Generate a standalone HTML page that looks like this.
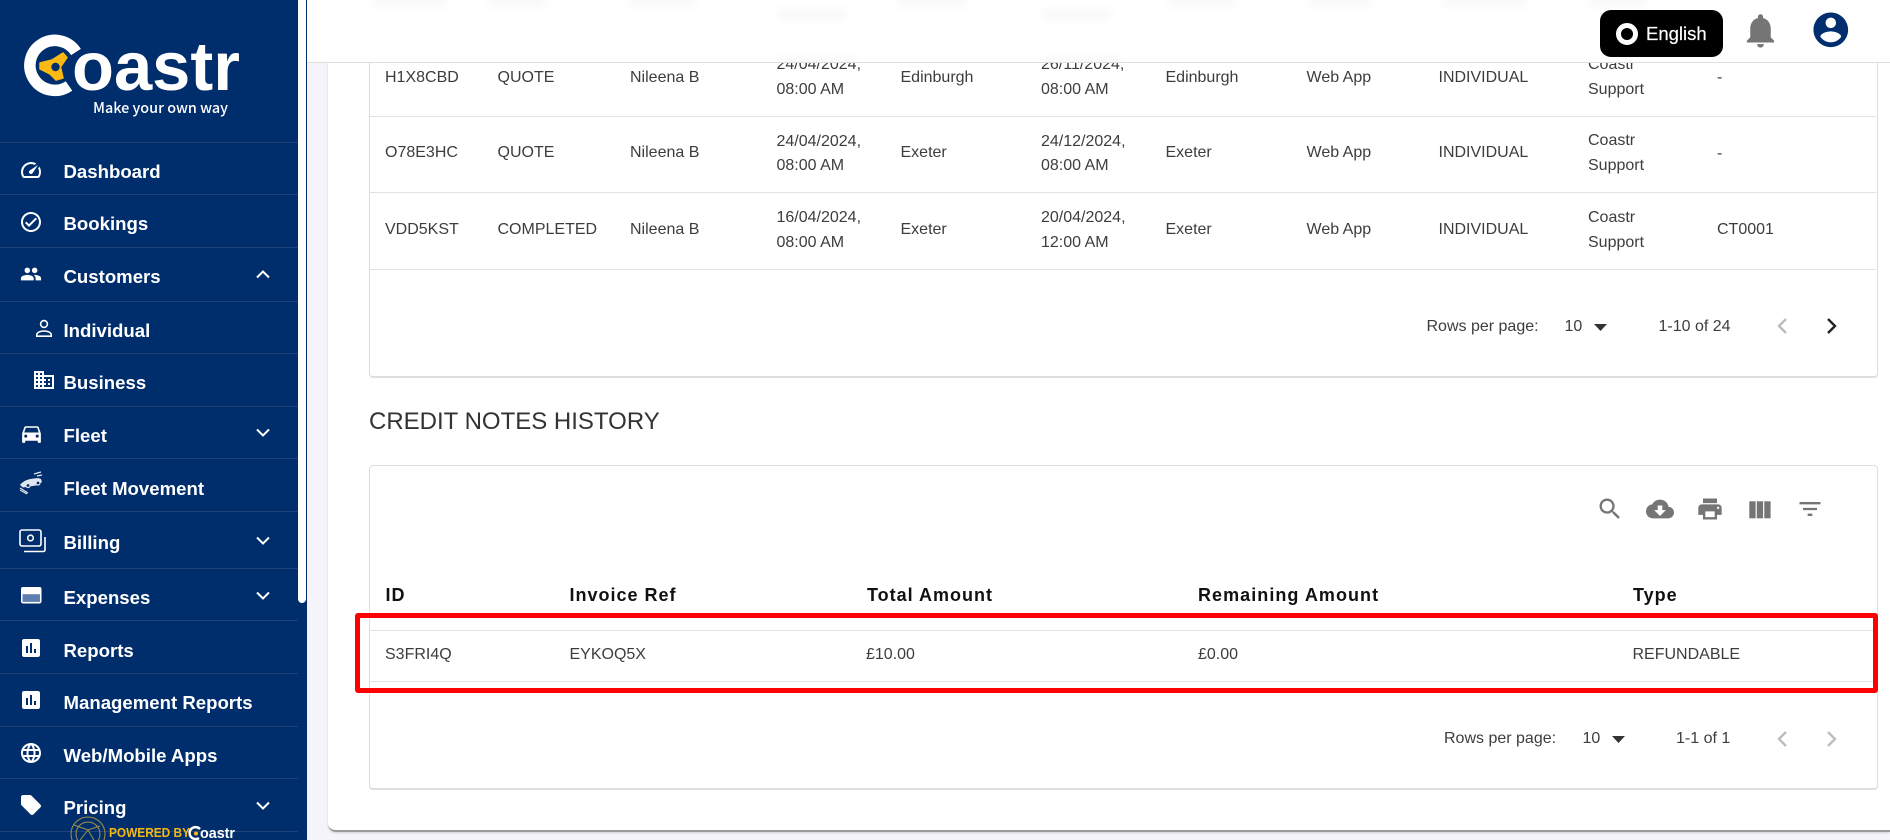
<!DOCTYPE html>
<html><head><meta charset="utf-8"><title>Coastr</title>
<style>
html,body{margin:0;padding:0;width:1890px;height:840px;overflow:hidden;background:#f4f4fa;font-family:"Liberation Sans",sans-serif}
.a{position:absolute}
.t{position:absolute;white-space:nowrap;line-height:20px;font-size:16px;color:#3d3d3d}
.h{position:absolute;white-space:nowrap;line-height:20px;font-size:18px;font-weight:bold;color:#111;letter-spacing:1px}
.ln{position:absolute;left:369px;width:1507px;height:1.5px;background:#e2e2e2}
.s{position:absolute;left:63.5px;white-space:nowrap;line-height:22px;font-size:18.6px;font-weight:bold;color:#fff}
.d{position:absolute;left:0;width:298px;height:1.5px;background:#1f4379}
.i{position:absolute;width:24px;height:24px;fill:#fff}
.ch{position:absolute;left:255px;width:16px;height:10px;fill:none;stroke:#fff;stroke-width:2}
.g{position:absolute;fill:#757575}
.blur{position:absolute;background:#000;opacity:.04;filter:blur(5px);border-radius:6px;height:8px}
</style></head><body>

<!-- main panel -->
<div class="a" style="left:328px;top:0;width:1562px;height:830px;background:#fff;border-bottom:2px solid #9a9a9a;border-radius:0 0 0 8px;box-shadow:0 1px 2px rgba(0,0,0,.15)"></div>

<!-- top card -->
<div class="a" style="left:368.5px;top:-10px;width:1507px;height:385px;border:1px solid #dedede;border-bottom:2px solid #dedede;border-radius:4px;background:#fff"></div>
<div class="ln" style="top:115.5px"></div>
<div class="ln" style="top:191.5px"></div>
<div class="ln" style="top:268.5px"></div>

<div class="a" style="left:0;top:1px">
<span class="t" style="left:385px;top:66.5px">H1X8CBD</span>
<span class="t" style="left:497.5px;top:66.5px">QUOTE</span>
<span class="t" style="left:630px;top:66.5px">Nileena B</span>
<span class="t" style="left:776.5px;top:54px">24/04/2024,</span>
<span class="t" style="left:776.5px;top:79px">08:00 AM</span>
<span class="t" style="left:900.5px;top:66.5px">Edinburgh</span>
<span class="t" style="left:1041px;top:54px">26/11/2024,</span>
<span class="t" style="left:1041px;top:79px">08:00 AM</span>
<span class="t" style="left:1165.5px;top:66.5px">Edinburgh</span>
<span class="t" style="left:1306.5px;top:66.5px">Web App</span>
<span class="t" style="left:1438.5px;top:66.5px">INDIVIDUAL</span>
<span class="t" style="left:1588px;top:54px">Coastr</span>
<span class="t" style="left:1588px;top:79px">Support</span>
<span class="t" style="left:1717px;top:67px">-</span>

<span class="t" style="left:385px;top:142px">O78E3HC</span>
<span class="t" style="left:497.5px;top:142px">QUOTE</span>
<span class="t" style="left:630px;top:142px">Nileena B</span>
<span class="t" style="left:776.5px;top:131px">24/04/2024,</span>
<span class="t" style="left:776.5px;top:155px">08:00 AM</span>
<span class="t" style="left:900.5px;top:142px">Exeter</span>
<span class="t" style="left:1041px;top:131px">24/12/2024,</span>
<span class="t" style="left:1041px;top:155px">08:00 AM</span>
<span class="t" style="left:1165.5px;top:142px">Exeter</span>
<span class="t" style="left:1306.5px;top:142px">Web App</span>
<span class="t" style="left:1438.5px;top:142px">INDIVIDUAL</span>
<span class="t" style="left:1588px;top:130px">Coastr</span>
<span class="t" style="left:1588px;top:155px">Support</span>
<span class="t" style="left:1717px;top:143px">-</span>

<span class="t" style="left:385px;top:219px">VDD5KST</span>
<span class="t" style="left:497.5px;top:219px">COMPLETED</span>
<span class="t" style="left:630px;top:219px">Nileena B</span>
<span class="t" style="left:776.5px;top:207px">16/04/2024,</span>
<span class="t" style="left:776.5px;top:232px">08:00 AM</span>
<span class="t" style="left:900.5px;top:219px">Exeter</span>
<span class="t" style="left:1041px;top:207px">20/04/2024,</span>
<span class="t" style="left:1041px;top:232px">12:00 AM</span>
<span class="t" style="left:1165.5px;top:219px">Exeter</span>
<span class="t" style="left:1306.5px;top:219px">Web App</span>
<span class="t" style="left:1438.5px;top:219px">INDIVIDUAL</span>
<span class="t" style="left:1588px;top:207px">Coastr</span>
<span class="t" style="left:1588px;top:232px">Support</span>
<span class="t" style="left:1717px;top:219px">CT0001</span>

<span class="t" style="left:1426.5px;top:316px">Rows per page:</span>
<span class="t" style="left:1564.5px;top:316px">10</span>
<svg class="a" style="left:1594px;top:322.5px" width="13" height="7"><path d="M0 0h13L6.5 7z" fill="#333"/></svg>
<span class="t" style="left:1658.5px;top:316px">1-10 of 24</span>
</div>
<svg class="a" style="left:1776px;top:316px" width="12" height="20" fill="none" stroke="#bdbdbd" stroke-width="2.4"><path d="M10 3L3 10l7 7"/></svg>
<svg class="a" style="left:1826px;top:316px" width="12" height="20" fill="none" stroke="#222" stroke-width="2.4"><path d="M2 3l7 7-7 7"/></svg>

<!-- credit notes -->
<div class="a" style="left:369px;top:407px;white-space:nowrap;font-size:24px;line-height:30px;color:#333">CREDIT NOTES HISTORY</div>
<div class="a" style="left:368.5px;top:465px;width:1507px;height:322px;border:1px solid #dedede;border-bottom:2px solid #dedede;border-radius:4px;background:#fff"></div>

<svg class="g" style="left:1596px;top:495px" width="28" height="28" viewBox="0 0 24 24"><path d="M15.5 14h-.79l-.28-.27C15.41 12.59 16 11.11 16 9.5 16 5.91 13.09 3 9.5 3S3 5.91 3 9.5 5.91 16 9.5 16c1.61 0 3.09-.59 4.23-1.57l.27.28v.79l5 4.99L20.49 19l-4.99-5zm-6 0C7.01 14 5 11.99 5 9.5S7.01 5 9.5 5 14 7.01 14 9.5 11.99 14 9.5 14z"/></svg>
<svg class="g" style="left:1646px;top:495px" width="28" height="28" viewBox="0 0 24 24"><path d="M19.35 10.04C18.67 6.59 15.64 4 12 4 9.11 4 6.6 5.64 5.35 8.04 2.34 8.36 0 10.91 0 14c0 3.31 2.69 6 6 6h13c2.76 0 5-2.24 5-5 0-2.64-2.05-4.78-4.65-4.96zM17 13l-5 5-5-5h3V9h4v4h3z"/></svg>
<svg class="g" style="left:1696px;top:495px" width="28" height="28" viewBox="0 0 24 24"><path d="M19 8H5c-1.66 0-3 1.34-3 3v6h4v4h12v-4h4v-6c0-1.66-1.34-3-3-3zm-3 11H8v-5h8v5zm3-7c-.55 0-1-.45-1-1s.45-1 1-1 1 .45 1 1-.45 1-1 1zm-1-9H6v4h12V3z"/></svg>
<svg class="a" style="left:1749px;top:500.5px" width="22" height="18" fill="#757575"><rect x="0.300" y="0.300" width="6.300" height="17"/><rect x="7.800" y="0.300" width="6.300" height="17"/><rect x="15.300" y="0.300" width="6.300" height="17"/></svg>
<svg class="g" style="left:1796px;top:495px" width="28" height="28" viewBox="0 0 24 24"><path d="M10 18h4v-2h-4v2zM3 6v2h18V6H3zm3 7h12v-2H6v2z"/></svg>

<span class="h" style="left:385.5px;top:584.5px">ID</span>
<span class="h" style="left:569.5px;top:584.5px">Invoice Ref</span>
<span class="h" style="left:867px;top:584.5px">Total Amount</span>
<span class="h" style="left:1198px;top:584.5px;letter-spacing:1.05px">Remaining Amount</span>
<span class="h" style="left:1633px;top:584.5px">Type</span>

<div class="ln" style="top:629.5px"></div>
<div class="ln" style="top:680.5px"></div>
<span class="t" style="left:385px;top:644.5px">S3FRI4Q</span>
<span class="t" style="left:569.5px;top:644.5px">EYKOQ5X</span>
<span class="t" style="left:866px;top:644.5px">£10.00</span>
<span class="t" style="left:1198px;top:644.5px">£0.00</span>
<span class="t" style="left:1632.5px;top:644.5px">REFUNDABLE</span>

<span class="t" style="left:1444px;top:729px">Rows per page:</span>
<span class="t" style="left:1582.5px;top:729px">10</span>
<svg class="a" style="left:1612px;top:736px" width="13" height="7"><path d="M0 0h13L6.5 7z" fill="#333"/></svg>
<span class="t" style="left:1676px;top:729px">1-1 of 1</span>
<svg class="a" style="left:1776px;top:729px" width="12" height="20" fill="none" stroke="#bdbdbd" stroke-width="2.4"><path d="M10 3L3 10l7 7"/></svg>
<svg class="a" style="left:1826px;top:729px" width="12" height="20" fill="none" stroke="#bdbdbd" stroke-width="2.4"><path d="M2 3l7 7-7 7"/></svg>

<!-- red highlight -->
<div class="a" style="left:355px;top:613px;width:1523px;height:80px;box-sizing:border-box;border:5.5px solid #f00;border-radius:3px"></div>

<!-- top header -->
<div class="a" style="left:307px;top:0;width:1583px;height:62px;background:#fff;border-bottom:1.5px solid #dedede;overflow:hidden">
  <div class="blur" style="left:65px;top:-2px;width:75px"></div>
  <div class="blur" style="left:180px;top:-2px;width:60px"></div>
  <div class="blur" style="left:320px;top:-2px;width:70px"></div>
  <div class="blur" style="left:470px;top:10px;width:70px"></div>
  <div class="blur" style="left:470px;top:58px;width:80px"></div>
  <div class="blur" style="left:590px;top:-2px;width:70px"></div>
  <div class="blur" style="left:735px;top:10px;width:70px"></div>
  <div class="blur" style="left:735px;top:58px;width:80px"></div>
  <div class="blur" style="left:860px;top:-2px;width:70px"></div>
  <div class="blur" style="left:1000px;top:-2px;width:65px"></div>
  <div class="blur" style="left:1135px;top:-2px;width:85px"></div>
  <div class="blur" style="left:1280px;top:-2px;width:60px"></div>
</div>
<div class="a" style="left:1600px;top:10px;width:122.5px;height:47px;background:#000;border-radius:11px"></div>
<div class="a" style="left:1616px;top:22.5px;width:22px;height:22px;box-sizing:border-box;border:5px solid #fff;border-radius:50%"></div>
<span class="t" style="left:1646px;top:24px;font-size:18.5px;color:#fff;-webkit-text-stroke:.2px #fff">English</span>
<svg class="a" style="left:1739.5px;top:10px;fill:#757575" width="41" height="41" viewBox="0 0 24 24"><path d="M12 22c1.1 0 2-.9 2-2h-4c0 1.1.89 2 2 2zm6-6v-5c0-3.07-1.64-5.64-4.5-6.32V4c0-.83-.67-1.5-1.5-1.5s-1.5.67-1.5 1.5v.68C7.63 5.36 6 7.92 6 11v5l-2 2v1h16v-1l-2-2z"/></svg>
<svg class="a" style="left:1809.7px;top:8.7px;fill:#002e6e" width="41.6" height="41.6" viewBox="0 0 24 24"><path d="M12 2C6.48 2 2 6.48 2 12s4.48 10 10 10 10-4.48 10-10S17.52 2 12 2zm0 3c1.66 0 3 1.34 3 3s-1.34 3-3 3-3-1.34-3-3 1.34-3 3-3zm0 14.2c-2.5 0-4.71-1.28-6-3.22.03-1.99 4-3.08 6-3.08 1.99 0 5.97 1.09 6 3.08-1.29 1.94-3.5 3.22-6 3.22z"/></svg>

<!-- sidebar -->
<div class="a" style="left:0;top:0;width:306px;height:840px;background:#002e6c;border-right:1.5px solid #002e6c"></div>
<div class="a" style="left:298px;top:-6px;width:8px;height:609px;background:#fff;border-radius:4px"></div>

<!-- logo -->
<svg class="a" style="left:0;top:0" width="298" height="125">
  <path d="M76 52A25 25 0 1 0 69 86" fill="none" stroke="#fff" stroke-width="11.5"/>
  <path d="M40 63L40 69L50 74L56 80L63 78L60.5 67L67 57.5L63 53L52 60Z" fill="#fdb913" stroke="#fdb913" stroke-width="1.5" stroke-linejoin="round"/>
  <circle cx="55.5" cy="67" r="4.2" fill="#002e6c"/>
  <text x="72" y="90" font-family="Liberation Sans" font-weight="bold" font-size="69" fill="#fff" textLength="168" lengthAdjust="spacingAndGlyphs">oastr</text>
  <text x="93" y="113" font-family="Noto Sans CJK SC,Liberation Sans,sans-serif" font-weight="500" font-size="14.5" fill="#fff" textLength="135" lengthAdjust="spacingAndGlyphs">Make your own way</text>
</svg>

<div class="d" style="top:141.5px"></div>
<div class="d" style="top:193.5px"></div>
<div class="d" style="top:246.5px"></div>
<div class="d" style="top:300.5px"></div>
<div class="d" style="top:352.5px"></div>
<div class="d" style="top:405.5px"></div>
<div class="d" style="top:457.5px"></div>
<div class="d" style="top:510.5px"></div>
<div class="d" style="top:567.5px"></div>
<div class="d" style="top:619.5px"></div>
<div class="d" style="top:672.5px"></div>
<div class="d" style="top:725.5px"></div>
<div class="d" style="top:777.5px"></div>
<div class="d" style="top:830.5px"></div>

<span class="s" style="top:161px">Dashboard</span>
<span class="s" style="top:213px">Bookings</span>
<span class="s" style="top:266px">Customers</span>
<span class="s" style="top:320px">Individual</span>
<span class="s" style="top:372px">Business</span>
<span class="s" style="top:425px">Fleet</span>
<span class="s" style="top:478px">Fleet Movement</span>
<span class="s" style="top:532px">Billing</span>
<span class="s" style="top:587px">Expenses</span>
<span class="s" style="top:640px">Reports</span>
<span class="s" style="top:692px">Management Reports</span>
<span class="s" style="top:745px">Web/Mobile Apps</span>
<span class="s" style="top:797px">Pricing</span>

<!-- sidebar icons -->
<svg class="i" style="left:19px;top:158px" viewBox="0 0 24 24"><path d="M20.38 8.57l-1.23 1.85a8 8 0 0 1-.22 7.58H5.07A8 8 0 0 1 15.58 6.85l1.85-1.23A10 10 0 0 0 3.35 19a2 2 0 0 0 1.72 1h13.85a2 2 0 0 0 1.74-1 10 10 0 0 0-.27-10.44zM10.59 15.41a2 2 0 0 0 2.83 0l5.66-8.49-8.49 5.66a2 2 0 0 0 0 2.83z"/></svg>
<svg class="i" style="left:19px;top:209.5px" viewBox="0 0 24 24"><path d="M16.59 7.58 10 14.17l-2.59-2.58L6 13l4 4 8-8zM12 2C6.48 2 2 6.48 2 12s4.48 10 10 10 10-4.48 10-10S17.52 2 12 2zm0 18c-4.42 0-8-3.58-8-8s3.58-8 8-8 8 3.58 8 8-3.58 8-8 8z"/></svg>
<svg class="i" style="left:20px;top:263px;width:22px;height:22px" viewBox="0 0 24 24"><path d="M16 11c1.66 0 2.99-1.34 2.99-3S17.66 5 16 5c-1.66 0-3 1.34-3 3s1.34 3 3 3zm-8 0c1.66 0 2.99-1.34 2.99-3S9.66 5 8 5C6.34 5 5 6.34 5 8s1.34 3 3 3zm0 2c-2.33 0-7 1.17-7 3.5V19h14v-2.5c0-2.33-4.67-3.5-7-3.5zm8 0c-.29 0-.62.02-.97.05 1.16.84 1.97 1.97 1.97 3.45V19h6v-2.5c0-2.33-4.67-3.5-7-3.5z"/></svg>
<svg class="a" style="left:34px;top:318px" width="20" height="20" fill="none" stroke="#fff" stroke-width="1.6"><circle cx="10" cy="6" r="3.4"/><path d="M2.8 18.2v-1.4c0-2.6 3.8-3.8 7.2-3.8s7.2 1.2 7.2 3.8v1.4z"/></svg>
<svg class="i" style="left:32px;top:368px" viewBox="0 0 24 24"><path d="M12 7V3H2v18h20V7H12zM6 19H4v-2h2v2zm0-4H4v-2h2v2zm0-4H4V9h2v2zm0-4H4V5h2v2zm4 12H8v-2h2v2zm0-4H8v-2h2v2zm0-4H8V9h2v2zm0-4H8V5h2v2zm10 12h-8v-2h2v-2h-2v-2h2v-2h-2V9h8v10zm-2-8h-2v2h2v-2zm0 4h-2v2h2v-2z"/></svg>
<svg class="i" style="left:18.5px;top:421px;width:25px;height:25px" viewBox="0 0 24 24"><path d="M18.92 6.01C18.72 5.42 18.16 5 17.5 5h-11c-.66 0-1.21.42-1.42 1.01L3 12v8c0 .55.45 1 1 1h1c.55 0 1-.45 1-1v-1h12v1c0 .55.45 1 1 1h1c.55 0 1-.45 1-1v-8l-2.08-5.99zM6.5 16c-.83 0-1.5-.67-1.5-1.5S5.67 13 6.5 13s1.5.67 1.5 1.5S7.33 16 6.5 16zm11 0c-.83 0-1.5-.67-1.5-1.5s.67-1.5 1.5-1.5 1.5.67 1.5 1.5-.67 1.5-1.5 1.5zM5 11l1.5-4.5h11L19 11H5z"/></svg>
<svg class="a" style="left:18px;top:470px" width="27" height="26" fill="none" stroke="#dfe6f0" stroke-width="1.2"><path d="M2 15c4-5 9-6 14-6.500 3-.5 5-.5 7 .5l1 3-6 3.500-13 2z" fill="#dfe6f0" stroke="none"/><circle cx="10" cy="15.500" r="2" fill="#002e6c"/><circle cx="20" cy="13" r="2" fill="#002e6c"/><path d="M16 4l7-2M19 6l5-1M2 18l8 5M2 20l7 4"/></svg>
<svg class="a" style="left:18px;top:528px" width="30" height="26" fill="none" stroke="#fff" stroke-width="1.6"><rect x="2" y="2" width="21" height="16" rx="2"/><circle cx="12.500" cy="10" r="2.800"/><path d="M27 9v13a1.500 1.500 0 0 1-1.500 1.500H6"/></svg>
<svg class="a" style="left:21px;top:587px" width="20.500" height="16.500" viewBox="0 0 20 16"><rect width="20" height="16" rx="2" fill="#fff"/><rect x="1.500" y="7" width="17" height="7.500" fill="#5d7eae"/></svg>
<svg class="i" style="left:19px;top:636px" viewBox="0 0 24 24"><path d="M19 3H5c-1.100 0-2 .9-2 2v14c0 1.100.9 2 2 2h14c1.100 0 2-.9 2-2V5c0-1.100-.9-2-2-2zM9 17H7v-7h2v7zm4 0h-2V7h2v10zm4 0h-2v-4h2v4z"/></svg>
<svg class="i" style="left:19px;top:688px" viewBox="0 0 24 24"><path d="M19 3H5c-1.100 0-2 .9-2 2v14c0 1.100.9 2 2 2h14c1.100 0 2-.9 2-2V5c0-1.100-.9-2-2-2zM9 17H7v-7h2v7zm4 0h-2V7h2v10zm4 0h-2v-4h2v4z"/></svg>
<svg class="i" style="left:19px;top:741px" viewBox="0 0 24 24"><path d="M11.990 2C6.470 2 2 6.480 2 12s4.470 10 9.990 10C17.520 22 22 17.520 22 12S17.520 2 11.990 2zm6.930 6h-2.950c-.32-1.250-.78-2.450-1.380-3.560 1.840.63 3.370 1.910 4.330 3.560zM12 4.040c.83 1.200 1.480 2.530 1.910 3.960h-3.820c.43-1.430 1.080-2.760 1.910-3.960zM4.260 14C4.100 13.360 4 12.690 4 12s.1-1.360.26-2h3.380c-.08.66-.14 1.320-.14 2 0 .68.06 1.340.14 2H4.260zm.82 2h2.950c.32 1.250.78 2.450 1.380 3.560-1.840-.63-3.370-1.900-4.330-3.560zm2.950-8H5.080c.96-1.660 2.490-2.930 4.330-3.560C8.810 5.550 8.350 6.750 8.030 8zM12 19.960c-.83-1.200-1.480-2.530-1.910-3.960h3.820c-.43 1.430-1.080 2.760-1.910 3.960zM14.340 14H9.660c-.09-.66-.16-1.320-.16-2 0-.68.07-1.350.16-2h4.680c.09.65.16 1.320.16 2 0 .68-.07 1.340-.16 2zm.25 5.560c.6-1.110 1.060-2.310 1.380-3.560h2.950c-.96 1.650-2.490 2.930-4.330 3.560zM16.360 14c.08-.66.14-1.320.14-2 0-.68-.06-1.340-.14-2h3.380c.16.64.26 1.310.26 2s-.1 1.360-.26 2h-3.380z"/></svg>
<svg class="i" style="left:19px;top:793px" viewBox="0 0 24 24"><path d="M21.410 11.580l-9-9C12.050 2.220 11.550 2 11 2H4c-1.100 0-2 .9-2 2v7c0 .55.22 1.050.59 1.420l9 9c.36.36.86.58 1.410.58.55 0 1.050-.22 1.410-.59l7-7c.37-.36.59-.86.59-1.410 0-.55-.23-1.060-.59-1.420z"/></svg>

<svg class="ch" style="top:269px"><path d="M2 8.500L8 2.500l6 6"/></svg>
<svg class="ch" style="top:428px"><path d="M2 1.500L8 7.500l6-6"/></svg>
<svg class="ch" style="top:536px"><path d="M2 1.500L8 7.500l6-6"/></svg>
<svg class="ch" style="top:591px"><path d="M2 1.500L8 7.500l6-6"/></svg>
<svg class="ch" style="top:801px"><path d="M2 1.500L8 7.500l6-6"/></svg>

<!-- powered by -->
<svg class="a" style="left:66px;top:810px" width="180" height="30">
  <g fill="none" stroke="#a39245" stroke-width="1"><circle cx="22" cy="24" r="17"/><circle cx="22" cy="24" r="12"/><path d="M8 15l14 5 12-4M14 30l8-10 7 12"/></g>
  <text x="43" y="27" font-family="Liberation Sans" font-weight="bold" font-size="12.500" fill="#f5b811" textLength="81" lengthAdjust="spacingAndGlyphs">POWERED BY</text>
  <path d="M134 19a6 6 0 1 0 -1 9" fill="none" stroke="#fff" stroke-width="2.500"/>
  <circle cx="130" cy="23.500" r="2" fill="#fdb913"/>
  <text x="134" y="28" font-family="Liberation Sans" font-weight="bold" font-size="14.500" fill="#fff" textLength="35" lengthAdjust="spacingAndGlyphs">oastr</text>
</svg>
</body></html>
